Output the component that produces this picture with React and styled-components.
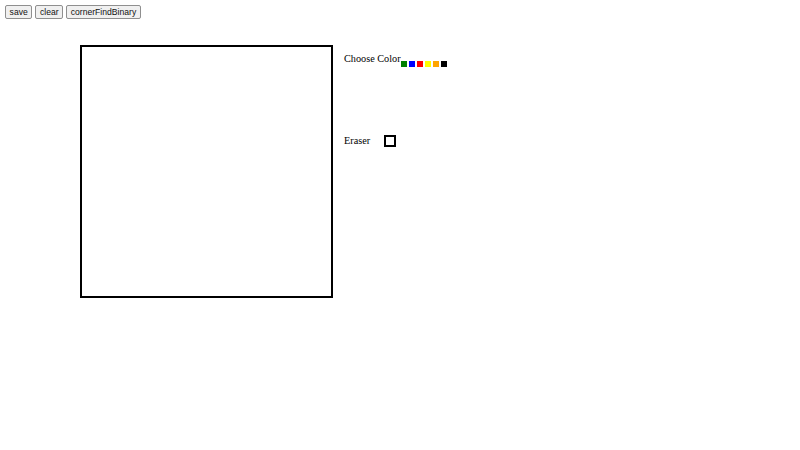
import React from "react";
import styled, { createGlobalStyle } from "styled-components";

const Global = createGlobalStyle`
  html, body { margin: 0; padding: 0; background: #fff; }
  body { padding: 5px; font-family: "Liberation Serif", "Times New Roman", serif; font-size: 10.24px; color: #000; }
`;

const Toolbar = styled.div`
  display: flex;
  gap: 3px;
  height: 13px;
`;

const Button = styled.button`
  box-sizing: border-box;
  height: 14px;
  padding: 0 3.6px;
  margin: 0;
  font-family: "Liberation Sans", Arial, sans-serif;
  font-size: 8.6px;
  line-height: 10px;
  color: #111;
  background: #f0f0f0;
  border: 1px solid #8f8f8f;
  border-radius: 2px;
`;

const Main = styled.div`
  display: flex;
  align-items: flex-start;
  margin-top: 27px;
  margin-left: 75px;
`;

const Canvas = styled.div`
  box-sizing: border-box;
  width: 253px;
  height: 253px;
  border: 2px solid #000;
  background: #fff;
`;

const Controls = styled.div`
  display: flex;
  flex-direction: column;
  margin-left: 11px;
  padding-top: 8px;
`;

const Row = styled.div`
  display: flex;
  align-items: ${(p) => p.$align || "baseline"};
  height: ${(p) => p.$h}px;
  line-height: 12px;
`;

const Label = styled.span`
  white-space: nowrap;
`;

const Swatches = styled.div`
  display: flex;
  gap: 2px;
  margin-top: 8px;
`;

const Swatch = styled.span`
  display: block;
  width: 6px;
  height: 6px;
  background: ${(p) => p.$c};
`;

const Check = styled.span`
  box-sizing: border-box;
  display: block;
  width: 12px;
  height: 12px;
  border: 2px solid #000;
  margin-left: 14px;
  background: #fff;
`;

const colors = ["#008000", "#0000ff", "#ff0000", "#ffff00", "#ffa500", "#000000"];

export default function App() {
  return (
    <>
      <Global />
      <Toolbar>
        <Button>save</Button>
        <Button>clear</Button>
        <Button>cornerFindBinary</Button>
      </Toolbar>
      <Main>
        <Canvas />
        <Controls>
          <Row $h={81} $align="flex-start">
            <Label>Choose Color</Label>
            <Swatches>
              {colors.map((c) => (
                <Swatch key={c} $c={c} />
              ))}
            </Swatches>
          </Row>
          <Row $h={14} $align="center">
            <Label>Eraser</Label>
            <Check />
          </Row>
        </Controls>
      </Main>
    </>
  );
}
